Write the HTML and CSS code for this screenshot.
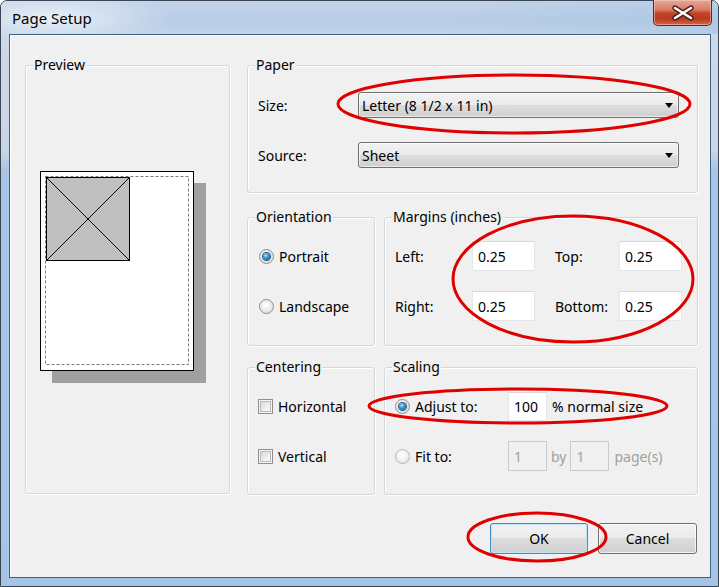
FILE: index.html
```html
<!DOCTYPE html>
<html>
<head>
<meta charset="utf-8">
<title>Page Setup</title>
<link rel="stylesheet" href="styles.css">
</head>
<body>
<div class="window">
  <div class="titlebar">
    <span class="title">Page Setup</span>
    <div class="close">
      <svg width="24" height="16" viewBox="0 0 24 16">
        <path d="M4 3 L20 13 M20 3 L4 13" stroke="#4a1e14" stroke-width="5.2" stroke-linecap="round"/>
        <path d="M4 3 L20 13 M20 3 L4 13" stroke="#ffffff" stroke-width="2.6" stroke-linecap="round"/>
      </svg>
    </div>
  </div>
  <div class="frame">
    <div class="client">
      <div class="main">
        <div class="group preview">
          <div class="legend">Preview</div>
          <svg class="page" width="168" height="214" viewBox="0 0 168 214">
            <rect x="12" y="12" width="154" height="200" fill="#a0a0a0"/>
            <rect x="0.5" y="0.5" width="153" height="199" fill="#ffffff" stroke="#000" stroke-width="1"/>
            <rect x="5.5" y="5.5" width="143" height="188" fill="none" stroke="#7a7a7a" stroke-width="1" stroke-dasharray="3 2"/>
            <rect x="6.5" y="6.5" width="83" height="83" fill="#c0c0c0" stroke="#000" stroke-width="1"/>
            <path d="M6.5 6.5 L89.5 89.5 M89.5 6.5 L6.5 89.5" stroke="#000" stroke-width="1"/>
          </svg>
        </div>
        <div class="right">
          <div class="group paper">
            <div class="legend">Paper</div>
            <div class="paper-grid">
              <span>Size:</span>
              <div class="combo"><span>Letter (8 1/2 x 11 in)</span><i class="arrow"></i></div>
              <span>Source:</span>
              <div class="combo"><span>Sheet</span><i class="arrow"></i></div>
            </div>
          </div>
          <div class="pair upper">
            <div class="group">
              <div class="legend">Orientation</div>
              <div class="options">
                <div class="opt"><span class="radio on"></span><span>Portrait</span></div>
                <div class="opt"><span class="radio"></span><span>Landscape</span></div>
              </div>
            </div>
            <div class="group">
              <div class="legend">Margins (inches)</div>
              <div class="margin-grid">
                <span>Left:</span><div class="tb">0.25</div>
                <span class="lbl2">Top:</span><div class="tb">0.25</div>
                <span>Right:</span><div class="tb">0.25</div>
                <span class="lbl2">Bottom:</span><div class="tb">0.25</div>
              </div>
            </div>
          </div>
          <div class="pair lower">
            <div class="group">
              <div class="legend">Centering</div>
              <div class="options checks">
                <div class="opt"><span class="check"></span><span>Horizontal</span></div>
                <div class="opt"><span class="check"></span><span>Vertical</span></div>
              </div>
            </div>
            <div class="group">
              <div class="legend">Scaling</div>
              <div class="scale-rows">
                <div class="srow">
                  <div class="lead"><span class="radio on"></span><span>Adjust to:</span></div>
                  <div class="tb small">100</div>
                  <span class="after">% normal size</span>
                </div>
                <div class="srow disabled">
                  <div class="lead"><span class="radio dis"></span><span>Fit to:</span></div>
                  <div class="tb small dis">1</div>
                  <span class="by">by</span>
                  <div class="tb small dis">1</div>
                  <span class="after">page(s)</span>
                </div>
              </div>
            </div>
          </div>
        </div>
      </div>
      <div class="buttons">
        <button class="btn ok">OK</button>
        <button class="btn cancel">Cancel</button>
      </div>
    </div>
  </div>
</div>
<svg class="annot" width="719" height="587" viewBox="0 0 719 587">
  <g fill="none" stroke="#e00000" stroke-width="3">
    <ellipse cx="514" cy="104" rx="176" ry="29"/>
    <ellipse cx="573" cy="279" rx="120" ry="63"/>
    <ellipse cx="518" cy="406" rx="149" ry="17"/>
    <ellipse cx="537" cy="537" rx="69" ry="24"/>
  </g>
</svg>
</body>
</html>
```
FILE: styles.css
```css
* { box-sizing: border-box; }
html, body { margin: 0; padding: 0; }
body {
  width: 719px;
  height: 587px;
  overflow: hidden;
  position: relative;
  background: #ffffff;
  font-family: "Noto Sans", "Open Sans", sans-serif;
  font-size: 14px;
  color: #000;
}

.window {
  width: 719px;
  height: 587px;
  border: 1px solid #3a4656;
  border-radius: 7px 7px 0 0;
  display: flex;
  flex-direction: column;
  background: linear-gradient(to bottom, #cfdae7 0, #c9d6e5 150px, #a9c6e7 168px, #a7c4e6 100%);
}

.titlebar {
  height: 33px;
  flex: none;
  display: flex;
  justify-content: space-between;
  align-items: flex-start;
  padding: 0 6px 0 11px;
  border-radius: 6px 6px 0 0;
  background:
    radial-gradient(ellipse 120px 26px at 50px 17px, rgba(236,241,247,0.95), rgba(236,241,247,0) 100%),
    linear-gradient(to right, rgba(255,255,255,0) 0, rgba(255,255,255,0) 60%, rgba(160,190,225,0.35) 100%),
    linear-gradient(to bottom, #c3d4e9 0, #b8cde6 60%, #c2d4ea 100%);
}
.title {
  font-size: 15px;
  line-height: 20px;
  margin-top: 7px;
  color: #000;
}
.close {
  width: 59px;
  height: 26px;
  margin-top: -1px;
  border: 1px solid #5b2a21;
  border-top: none;
  border-radius: 0 0 5px 5px;
  background: linear-gradient(to bottom, #e6a897 0%, #d77a63 40%, #c4432a 52%, #b93a22 75%, #d2674b 100%);
  box-shadow: inset 0 0 0 1px rgba(255, 220, 210, 0.45);
  display: flex;
  align-items: center;
  justify-content: center;
}

.frame {
  flex: 1;
  display: flex;
  padding: 0 7px 8px 8px;
}
.client {
  flex: 1;
  background: #f0f0f0;
  border: 1px solid #42607f;
  box-shadow: inset 1px 1px 0 #ffffff;
  padding: 30px 0 0 15px;
}

.main {
  display: flex;
  gap: 17px;
}
.group {
  border: 1px solid #d5d8db;
  border-radius: 3px;
  box-shadow: inset 1px 1px 0 #ffffff, 1px 1px 0 #ffffff;
}
.legend {
  width: fit-content;
  margin: -10px 0 0 7px;
  padding: 0 1px;
  line-height: 18px;
  background: #f0f0f0;
}

.preview {
  width: 205px;
  height: 429px;
}
.page {
  display: block;
  margin: 97px 0 0 14px;
}

.right {
  width: 451px;
  display: flex;
  flex-direction: column;
}
.paper {
  height: 128px;
  margin-bottom: 24px;
}
.paper-grid {
  display: grid;
  grid-template-columns: 100px 321px;
  grid-template-rows: 26px 26px;
  row-gap: 24px;
  align-items: center;
  margin-top: 18px;
  padding-left: 10px;
}
.combo {
  height: 26px;
  border: 1px solid #707070;
  border-radius: 3px;
  background: linear-gradient(to bottom, #f2f2f2 0%, #ebebeb 50%, #dddddd 50%, #cfcfcf 100%);
  box-shadow: inset 0 0 0 1px rgba(255,255,255,0.6);
  display: flex;
  align-items: center;
  justify-content: space-between;
  padding: 0 5px 0 3px;
}
.arrow {
  width: 0;
  height: 0;
  border-left: 4px solid transparent;
  border-right: 4px solid transparent;
  border-top: 5px solid #000;
}

.pair {
  display: grid;
  grid-template-columns: 128px 314px;
  column-gap: 9px;
}
.pair.upper { margin-bottom: 21px; }
.pair.upper .group { height: 129px; }
.pair.lower .group { height: 128px; }

.options {
  display: flex;
  flex-direction: column;
  gap: 30px;
  margin-top: 20px;
  padding-left: 11px;
}
.opt {
  height: 20px;
  display: flex;
  align-items: center;
  gap: 5px;
}
.checks { padding-left: 10px; }

.radio {
  position: relative;
  flex: none;
  width: 15px;
  height: 15px;
  border-radius: 50%;
  border: 1px solid #8e8f8f;
  background: radial-gradient(circle at 45% 40%, #ffffff 0, #f2f2f2 35%, #cfcfcf 100%);
}
.radio.on::after {
  content: "";
  position: absolute;
  left: 3px;
  top: 3px;
  width: 7px;
  height: 7px;
  border-radius: 50%;
  background: radial-gradient(circle at 40% 35%, #b5e6ff 0, #3a97d6 40%, #0e4676 100%);
  box-shadow: 0 0 0 1px #29577e;
}
.radio.dis {
  border-color: #b7b7b7;
  background: radial-gradient(circle at 45% 40%, #ffffff 0, #f4f4f4 40%, #dedede 100%);
}
.check {
  flex: none;
  width: 15px;
  height: 15px;
  border: 1px solid #8e8f8f;
  background: linear-gradient(135deg, #d2d2d2 0%, #f0f0f0 60%, #fbfbfb 100%);
  box-shadow: inset 0 0 0 1px #f6f6f6, inset 0 0 0 2px #b9b9b9;
}

.margin-grid {
  display: grid;
  grid-template-columns: 77px 63px 84px 63px;
  grid-template-rows: 30px 30px;
  row-gap: 20px;
  align-items: center;
  margin-top: 15px;
  padding-left: 10px;
}
.lbl2 { padding-left: 20px; }
.tb {
  height: 30px;
  background: #ffffff;
  border: 1px solid #e4e6e9;
  border-top-color: #d6d8db;
  padding-left: 5px;
  display: flex;
  align-items: center;
}

.scale-rows {
  display: flex;
  flex-direction: column;
  gap: 20px;
  margin-top: 15px;
  padding-left: 10px;
}
.srow {
  height: 30px;
  display: flex;
  align-items: center;
}
.lead {
  width: 113px;
  display: flex;
  align-items: center;
  gap: 5px;
}
.tb.small {
  width: 39px;
  padding-left: 5px;
}
.srow:first-child .tb.small { height: 29px; }
.after { margin-left: 5px; }
.tb.dis {
  background: transparent;
  border: 1px solid #c9cbce;
  color: #a0a0a0;
}
.srow.disabled .by,
.srow.disabled .after { color: #a0a0a0; }
.by { margin: 0 4px; }

.buttons {
  width: 673px;
  display: flex;
  justify-content: flex-end;
  gap: 10px;
  margin-top: 28px;
  padding-right: 1px;
}
.btn {
  height: 31px;
  width: 98px;
  padding: 0;
  font: inherit;
  color: #000;
  border: 1px solid #707070;
  border-radius: 3px;
  background: linear-gradient(to bottom, #f2f2f2 0%, #ebebeb 50%, #dddddd 50%, #cfcfcf 100%);
  box-shadow: inset 0 0 0 1px rgba(255,255,255,0.7);
}
.btn.ok {
  border-color: #3c8fc8;
  box-shadow: inset 0 0 0 1px #bfe6f8;
}
.btn.cancel { width: 99px; }

.annot {
  position: absolute;
  left: 0;
  top: 0;
  pointer-events: none;
}
```
